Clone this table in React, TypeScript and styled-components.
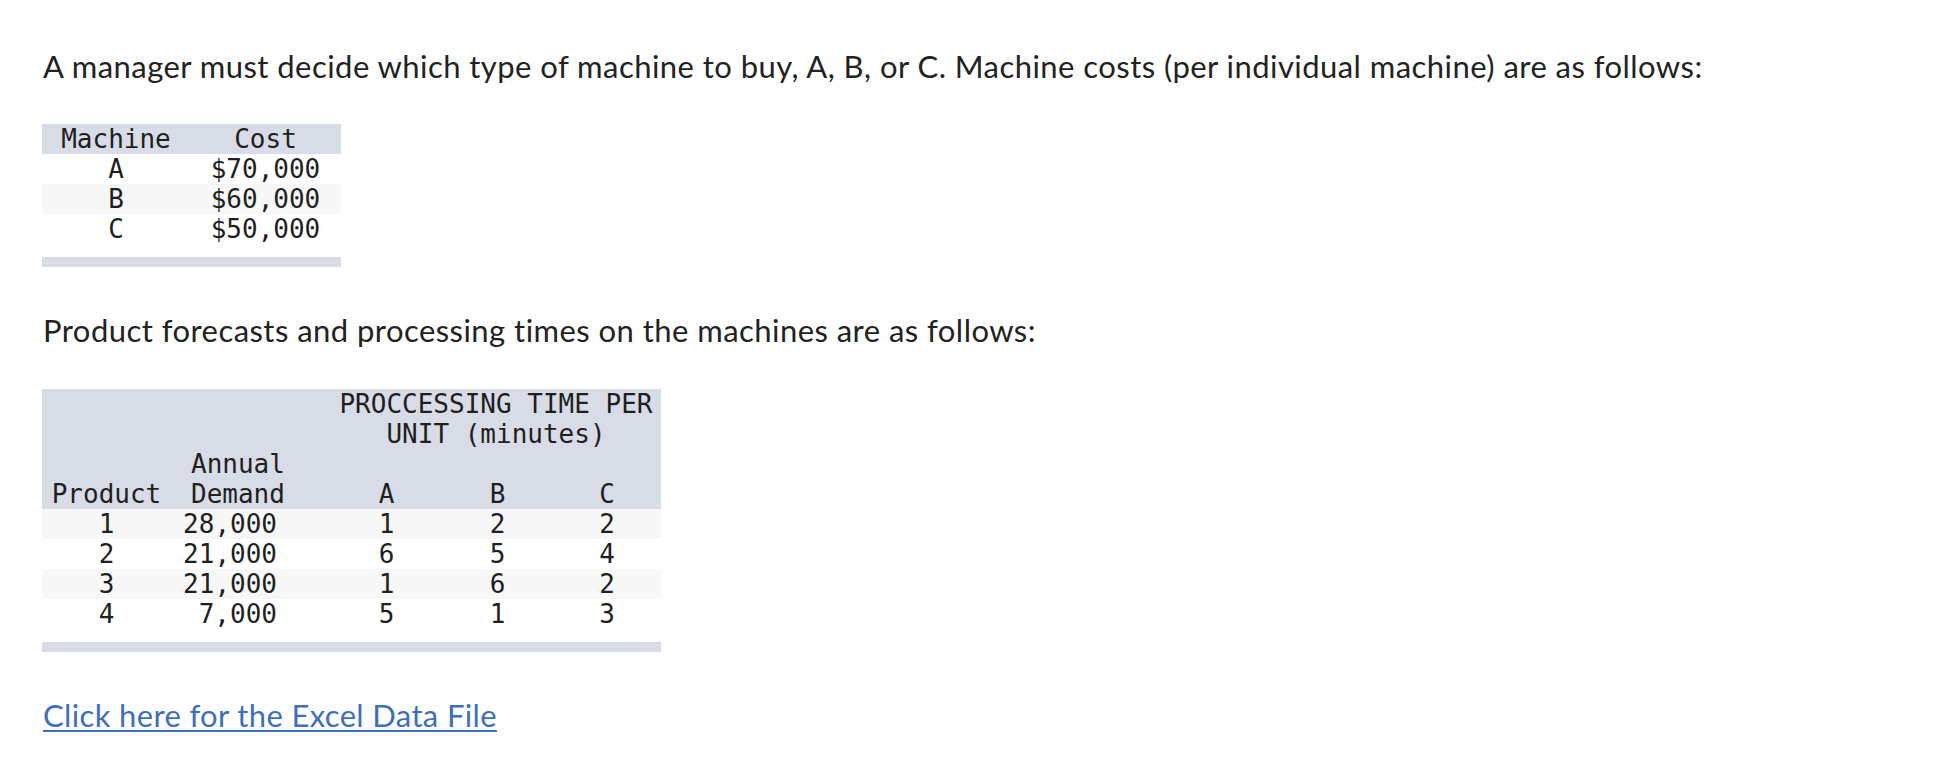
import React from "react";
import styled, { createGlobalStyle } from "styled-components";

const GlobalStyle = createGlobalStyle`
  html, body { margin: 0; padding: 0; background: #ffffff; }
  body { font-family: Lato, "Open Sans", sans-serif; color: #222222; }
`;

const Page = styled.main`
  padding: 45px 0 0 42px;
  display: flex;
  flex-direction: column;
  align-items: flex-start;
`;

const Para = styled.p<{ $top: number }>`
  margin: ${(p) => p.$top}px 0 0 0;
  padding-left: 1px;
  font-size: 31px;
  letter-spacing: 0.45px;
  line-height: 42px;
  color: #222222;
`;

const DataTable = styled.table<{ $top: number }>`
  margin-top: ${(p) => p.$top}px;
  border-collapse: collapse;
  table-layout: fixed;
  font-family: "DejaVu Sans Mono", "Liberation Mono", monospace;
  font-size: 26px;
  line-height: 30px;
  color: #1f1f1f;
`;

const HeadRow = styled.tr`
  background: #d8dce6;
`;

const BodyRow = styled.tr<{ $shaded: boolean }>`
  background: ${(p) => (p.$shaded ? "#f7f7f7" : "#ffffff")};
`;

const Cell = styled.td<{ $w?: number; $align?: string; $pl?: number; $pr?: number }>`
  padding: 0 ${(p) => p.$pr ?? 0}px 0 ${(p) => p.$pl ?? 0}px;
  width: ${(p) => (p.$w ? `${p.$w}px` : "auto")};
  text-align: ${(p) => p.$align ?? "center"};
  white-space: pre;
  vertical-align: bottom;
  height: 30px;
`;

const GapRow = styled.tr`
  height: 13px;
`;

const FootRow = styled.tr`
  height: 10px;
  background: #d8dce6;
`;

const LinkWrap = styled.div`
  margin-top: 42px;
`;

const DataLink = styled.a`
  padding-left: 1px;
  font-size: 31px;
  letter-spacing: 0.35px;
  line-height: 42px;
  color: #3f6fb4;
  text-decoration: underline;
  text-underline-offset: 3px;
  text-decoration-thickness: 2px;
`;

const machines = [
  ["A", "$70,000"],
  ["B", "$60,000"],
  ["C", "$50,000"],
];

const products = [
  ["1", "28,000", "1", "2", "2"],
  ["2", "21,000", "6", "5", "4"],
  ["3", "21,000", "1", "6", "2"],
  ["4", "7,000", "5", "1", "3"],
];

export default function App() {
  return (
    <>
      <GlobalStyle />
      <Page>
        <Para $top={0}>
          A manager must decide which type of machine to buy, A, B, or C. Machine costs (per individual machine) are as follows:
        </Para>
        <DataTable $top={37}>
          <thead>
            <HeadRow>
              <Cell $w={148}>Machine</Cell>
              <Cell $w={151}>Cost</Cell>
            </HeadRow>
          </thead>
          <tbody>
            {machines.map((m, i) => (
              <BodyRow key={m[0]} $shaded={i % 2 === 1}>
                <Cell>{m[0]}</Cell>
                <Cell>{m[1]}</Cell>
              </BodyRow>
            ))}
            <GapRow>
              <td colSpan={2} />
            </GapRow>
            <FootRow>
              <td colSpan={2} />
            </FootRow>
          </tbody>
        </DataTable>
        <Para $top={42}>
          Product forecasts and processing times on the machines are as follows:
        </Para>
        <DataTable $top={38}>
          <thead>
            <HeadRow>
              <Cell $w={129} />
              <Cell $w={160} />
              <Cell $w={330} colSpan={3}>
                {"PROCCESSING TIME PER\nUNIT (minutes)"}
              </Cell>
            </HeadRow>
            <HeadRow>
              <Cell />
              <Cell $align="left" $pl={20}>Annual</Cell>
              <Cell colSpan={3} />
            </HeadRow>
            <HeadRow>
              <Cell>Product</Cell>
              <Cell $align="left" $pl={20}>Demand</Cell>
              <Cell $w={111}>A</Cell>
              <Cell $w={111}>B</Cell>
              <Cell $w={108}>C</Cell>
            </HeadRow>
          </thead>
          <tbody>
            {products.map((r, i) => (
              <BodyRow key={r[0]} $shaded={i % 2 === 0}>
                <Cell>{r[0]}</Cell>
                <Cell $align="right" $pr={54}>{r[1]}</Cell>
                <Cell>{r[2]}</Cell>
                <Cell>{r[3]}</Cell>
                <Cell>{r[4]}</Cell>
              </BodyRow>
            ))}
            <GapRow>
              <td colSpan={5} />
            </GapRow>
            <FootRow>
              <td colSpan={5} />
            </FootRow>
          </tbody>
        </DataTable>
        <LinkWrap>
          <DataLink href="#">Click here for the Excel Data File</DataLink>
        </LinkWrap>
      </Page>
    </>
  );
}
